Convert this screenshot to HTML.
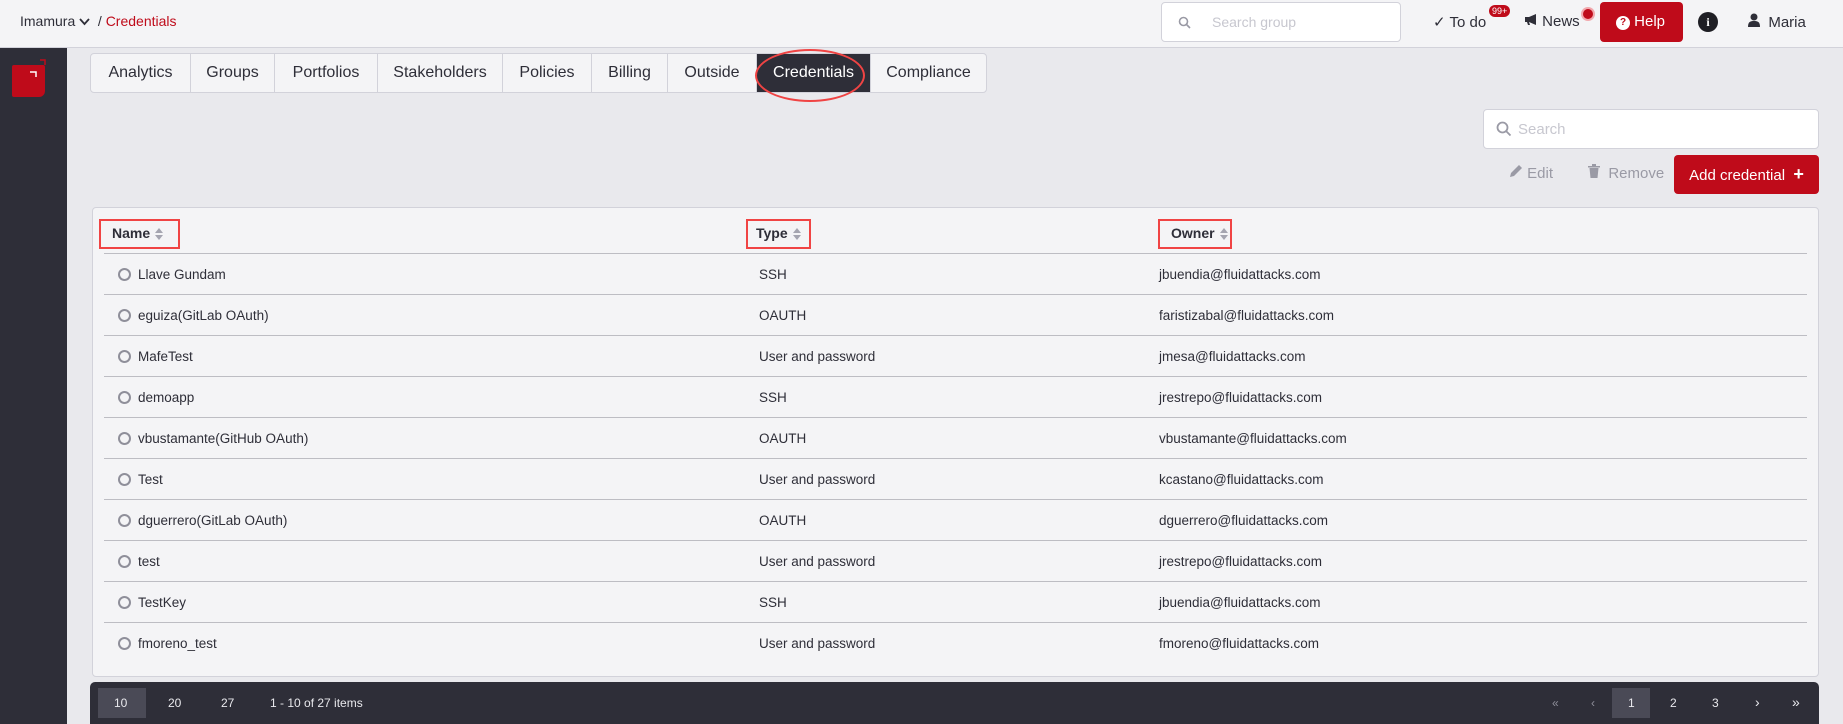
<!DOCTYPE html>
<html><head><meta charset="utf-8"><style>
*{box-sizing:border-box;margin:0;padding:0}
html,body{width:1843px;height:724px;overflow:hidden}
body{background:#e9e9ed;font-family:"Liberation Sans",sans-serif;color:#2e2e38;position:relative;font-size:14px}
.abs{position:absolute}
.top{left:0;top:0;width:1843px;height:48px;background:#f4f4f6;border-bottom:1px solid #d2d2da}
.side{left:0;top:48px;width:67px;height:676px;background:#2e2e38}
.tabs{left:90px;top:53px;height:40px;display:flex;border:1px solid #d2d2da;border-radius:4px;background:#f4f4f6;overflow:hidden}
.tabs div{height:38px;line-height:38px;font-size:16px;border-right:1px solid #d2d2da;text-align:center}
.card{left:92px;top:207px;width:1727px;height:470px;background:#f4f4f6;border:1px solid #d2d2da;border-radius:4px}
.row{position:absolute;left:12px;width:1703px;height:41px;border-bottom:1.5px solid #bdbdc3;font-size:13.5px}
.row span{position:absolute;top:13px}
.radio{position:absolute;left:14px;top:14px;width:13px;height:13px;border:2px solid #8f8f9a;border-radius:50%}
.hd{position:absolute;top:225px;font-weight:bold;font-size:14px}
.box{position:absolute;border:2.5px solid #f04444}
.sort{display:inline-block;width:8px;margin-left:5px;vertical-align:middle}
.foot{left:90px;top:682px;width:1729px;height:42px;background:#2e2e38;border-radius:5px 5px 0 0;color:#e9e9ed;font-size:12px}
.foot span{position:absolute;top:14px}
</style></head><body>
<div class="abs top"></div>
<div class="abs" style="left:20px;top:13px;font-size:14px">Imamura <svg width="11" height="8" viewBox="0 0 11 8"><path d="M1 1l4.5 5 4.5-5" stroke="#2e2e38" stroke-width="1.8" fill="none"/></svg> &nbsp;/ <span style="color:#bf0b1a">Credentials</span></div>
<div class="abs" style="left:1161px;top:2px;width:240px;height:40px;background:#fff;border:1px solid #d2d2da;border-radius:4px"><svg class="abs" style="left:16px;top:13px" width="13" height="13" viewBox="0 0 13 13"><circle cx="5.5" cy="5.5" r="4" stroke="#9a9aa5" stroke-width="1.6" fill="none"/><path d="M8.5 8.5l3.5 3.5" stroke="#9a9aa5" stroke-width="1.6"/></svg><span class="abs" style="left:50px;top:11px;color:#c7c7cf;font-size:14px">Search group</span></div>
<div class="abs" style="left:1433px;top:13px;font-size:15px">✓ To do</div>
<div class="abs" style="left:1489px;top:5px;background:#bf0b1a;color:#fff;font-size:9px;border-radius:7px;padding:1px 3px">99+</div>
<div class="abs" style="left:1524px;top:13px;font-size:15px"><svg width="14" height="13" viewBox="0 0 14 13"><path d="M1 4h4l7-3v11l-7-3H1z M3 9l1 3h2l-1-3" fill="#2e2e38"/></svg> News</div>
<div class="abs" style="left:1583px;top:9px;width:10px;height:10px;border-radius:50%;background:#bf0b1a;box-shadow:0 0 0 2px #f2a9ae"></div>
<div class="abs" style="left:1600px;top:2px;width:83px;height:40px;background:#bf0b1a;border-radius:4px;color:#fff;font-size:15px;line-height:40px;padding-left:16px"><span style="display:inline-block;width:14px;height:14px;border-radius:50%;background:#fff;color:#bf0b1a;font-size:10px;line-height:14px;text-align:center;font-weight:bold;vertical-align:1px">?</span> Help</div>
<div class="abs" style="left:1698px;top:12px;width:20px;height:20px;border-radius:50%;background:#1e1e24;color:#fff;font-size:12px;font-weight:bold;text-align:center;line-height:20px;font-family:'Liberation Serif',serif">i</div>
<div class="abs" style="left:1748px;top:13px;font-size:15px"><svg width="12" height="14" viewBox="0 0 12 14"><circle cx="6" cy="4" r="3.5" fill="#2e2e38"/><path d="M0 14c0-5 2-6 6-6s6 1 6 6z" fill="#2e2e38"/></svg> &nbsp;Maria</div>
<div class="abs side"></div>
<div class="abs" style="left:12px;top:65px;width:33px;height:32px;background:#bf0b1a;border-radius:2px 2px 6px 2px"></div>
<svg class="abs" style="left:20px;top:58px" width="30" height="20" viewBox="0 0 30 20"><path d="M20 2h5v5" stroke="#bf0b1a" stroke-width="1.5" fill="none"/><path d="M10 14h6v5" stroke="#fff" stroke-width="1.5" fill="none"/></svg>
<div class="abs tabs">
<div style="width:100px">Analytics</div><div style="width:84px">Groups</div><div style="width:103px">Portfolios</div><div style="width:125px">Stakeholders</div><div style="width:89px">Policies</div><div style="width:76px">Billing</div><div style="width:89px">Outside</div><div style="width:114px;background:#2e2e38;color:#fff">Credentials</div><div style="width:115px;border-right:none">Compliance</div>
</div>
<div class="abs" style="left:755px;top:49px;width:110px;height:53px;border:2.5px solid #f04444;border-radius:50%"></div>
<div class="abs" style="left:1483px;top:109px;width:336px;height:40px;background:#fff;border:1px solid #d2d2da;border-radius:4px"><svg class="abs" style="left:12px;top:11px" width="16" height="16" viewBox="0 0 16 16"><circle cx="6.5" cy="6.5" r="5" stroke="#9a9aa5" stroke-width="1.8" fill="none"/><path d="M10 10l4.5 4.5" stroke="#9a9aa5" stroke-width="1.8"/></svg><span class="abs" style="left:34px;top:11px;color:#c7c7cf;font-size:15px">Search</span></div>
<div class="abs" style="left:1509px;top:164px;color:#9a9aa5;font-size:15px"><svg width="14" height="14" viewBox="0 0 14 14"><path d="M1 13l1-4 8-8 3 3-8 8z" fill="#9a9aa5"/></svg> Edit</div>
<div class="abs" style="left:1588px;top:164px;color:#9a9aa5;font-size:15px"><svg width="12" height="14" viewBox="0 0 12 14"><path d="M0 2h12v1.5H0zM4 0h4v2H4zM1.5 4h9l-1 10h-7z" fill="#9a9aa5"/></svg> &nbsp;Remove</div>
<div class="abs" style="left:1674px;top:155px;width:145px;height:39px;background:#bf0b1a;border-radius:4px;color:#fff;font-size:15px;line-height:39px;text-align:center">Add credential &nbsp;<b style="font-size:18px">+</b></div>
<div class="abs card"></div>
<div style="position:absolute;left:104px;top:253px;width:1703px;border-bottom:1.5px solid #bdbdc3"></div>
<div class="hd" style="left:112px">Name<svg class="sort" width="8" height="12" viewBox="0 0 8 12"><path d="M4 0l4 5H0zM4 12l4-5H0z" fill="#a5a5b0"/></svg></div>
<div class="hd" style="left:756px">Type<svg class="sort" width="8" height="12" viewBox="0 0 8 12"><path d="M4 0l4 5H0zM4 12l4-5H0z" fill="#a5a5b0"/></svg></div>
<div class="hd" style="left:1171px">Owner<svg class="sort" width="8" height="12" viewBox="0 0 8 12"><path d="M4 0l4 5H0zM4 12l4-5H0z" fill="#a5a5b0"/></svg></div>
<div class="box" style="left:99px;top:219px;width:81px;height:30px"></div>
<div class="box" style="left:746px;top:219px;width:65px;height:30px"></div>
<div class="box" style="left:1158px;top:219px;width:74px;height:30px"></div>
<div style="position:absolute;left:92px;top:0">
<div class="row" style="top:254px"><i class="radio"></i><span style="left:34px">Llave Gundam</span><span style="left:655px">SSH</span><span style="left:1055px">jbuendia@fluidattacks.com</span></div>
<div class="row" style="top:295px"><i class="radio"></i><span style="left:34px">eguiza(GitLab OAuth)</span><span style="left:655px">OAUTH</span><span style="left:1055px">faristizabal@fluidattacks.com</span></div>
<div class="row" style="top:336px"><i class="radio"></i><span style="left:34px">MafeTest</span><span style="left:655px">User and password</span><span style="left:1055px">jmesa@fluidattacks.com</span></div>
<div class="row" style="top:377px"><i class="radio"></i><span style="left:34px">demoapp</span><span style="left:655px">SSH</span><span style="left:1055px">jrestrepo@fluidattacks.com</span></div>
<div class="row" style="top:418px"><i class="radio"></i><span style="left:34px">vbustamante(GitHub OAuth)</span><span style="left:655px">OAUTH</span><span style="left:1055px">vbustamante@fluidattacks.com</span></div>
<div class="row" style="top:459px"><i class="radio"></i><span style="left:34px">Test</span><span style="left:655px">User and password</span><span style="left:1055px">kcastano@fluidattacks.com</span></div>
<div class="row" style="top:500px"><i class="radio"></i><span style="left:34px">dguerrero(GitLab OAuth)</span><span style="left:655px">OAUTH</span><span style="left:1055px">dguerrero@fluidattacks.com</span></div>
<div class="row" style="top:541px"><i class="radio"></i><span style="left:34px">test</span><span style="left:655px">User and password</span><span style="left:1055px">jrestrepo@fluidattacks.com</span></div>
<div class="row" style="top:582px"><i class="radio"></i><span style="left:34px">TestKey</span><span style="left:655px">SSH</span><span style="left:1055px">jbuendia@fluidattacks.com</span></div>
<div class="row" style="top:623px;border:none"><i class="radio"></i><span style="left:34px">fmoreno_test</span><span style="left:655px">User and password</span><span style="left:1055px">fmoreno@fluidattacks.com</span></div>
</div>
<div class="abs foot">
<div class="abs" style="left:8px;top:6px;width:48px;height:30px;background:#4a4a56"></div>
<span style="left:24px">10</span><span style="left:78px">20</span><span style="left:131px">27</span><span style="left:180px">1 - 10 of 27 items</span>
<span style="left:1462px;color:#8f8f9a">«</span><span style="left:1501px;color:#8f8f9a">‹</span>
<div class="abs" style="left:1522px;top:6px;width:38px;height:30px;background:#4a4a56"></div>
<span style="left:1538px">1</span><span style="left:1580px">2</span><span style="left:1622px">3</span><span style="left:1665px;font-size:14px;top:12px">›</span><span style="left:1702px;font-size:14px;top:12px">»</span>
</div>
</body></html>
